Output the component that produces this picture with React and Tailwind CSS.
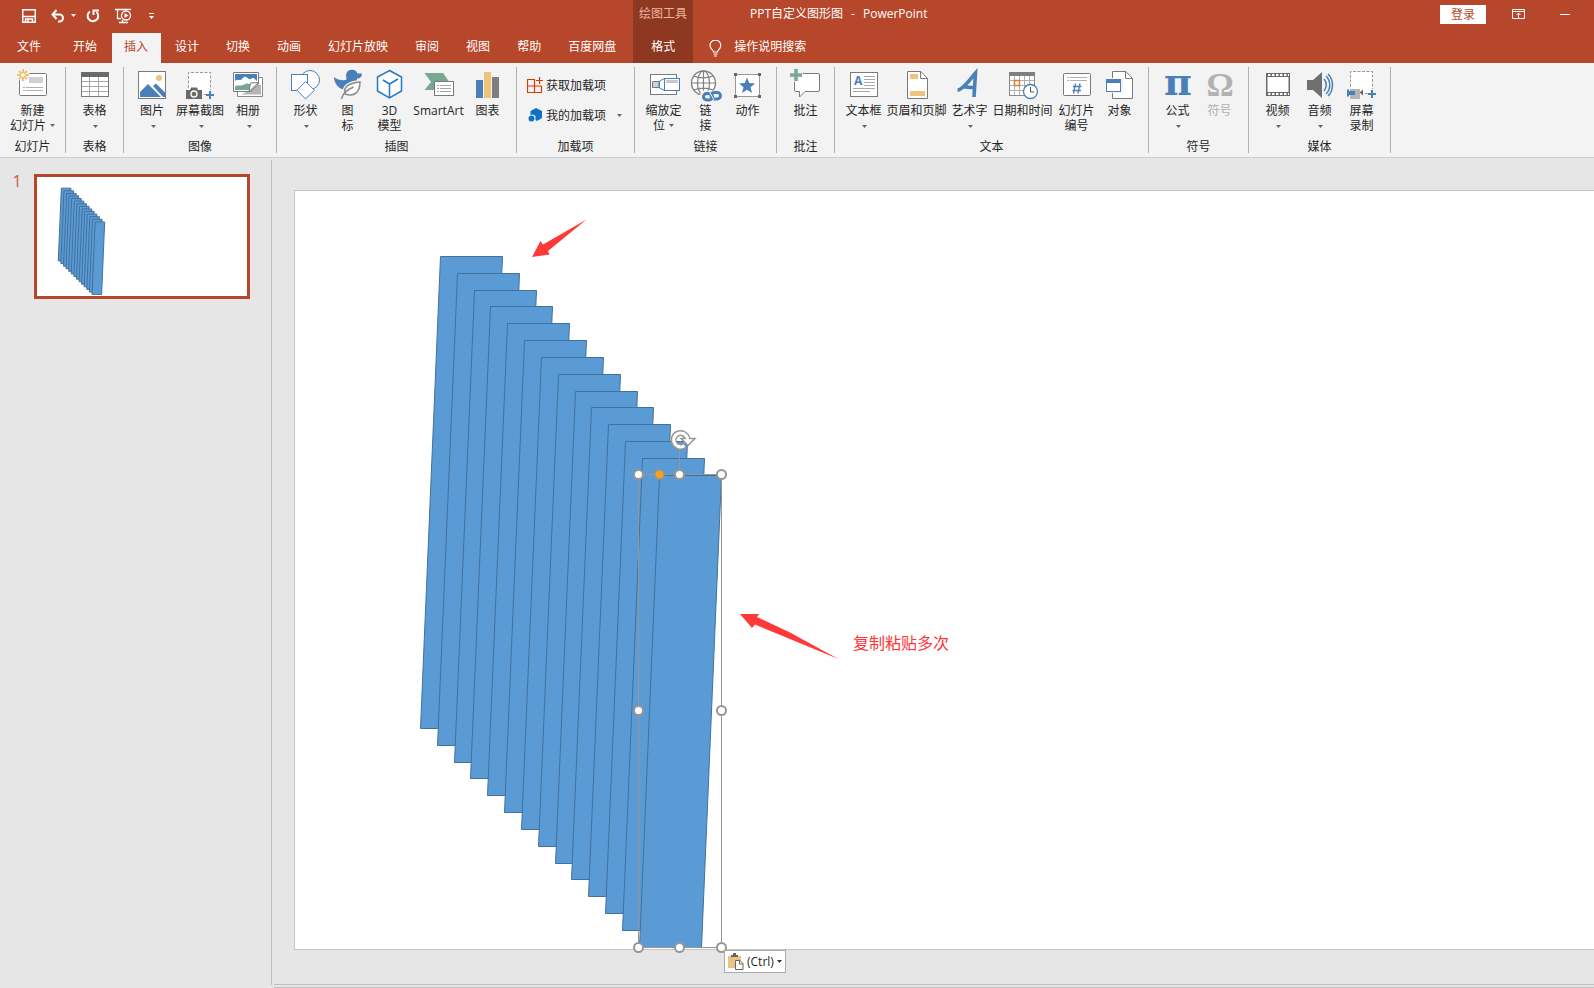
import React from 'react';

const BLUE = '#4a80b8';
const GREY = '#7a7a7a';
const GOLD = '#eec37a';
const GREEN = '#78a892';

function Icon({ children }) {
  return (
    <svg width="32" height="32" viewBox="0 0 32 32" fill="none" className="shrink-0 overflow-visible" aria-hidden="true">
      {children}
    </svg>
  );
}

function Caret({ color = '#666' }) {
  return (
    <svg width="5" height="3" viewBox="0 0 5 3" className="shrink-0" aria-hidden="true">
      <path d="M0 0h5L2.5 3z" fill={color} />
    </svg>
  );
}

const icons = {
  newSlide: (
    <Icon>
      <rect x="2.5" y="5.5" width="27" height="22" rx="1" fill="#fff" stroke={GREY} />
      <path d="M12 9h14v6H12z" fill="#d0d0d0" />
      <path d="M6 19.5h2m1 0h17M6 22.5h2m1 0h17" stroke="#b0b0b0" />
      <circle cx="6" cy="7" r="6.5" fill="#f3f3f3" />
      <path d="M6 1v3M6 10v3M0 7h3M9 7h3M2 3l2 2M8 9l2 2M10 3L8 5M4 9l-2 2" stroke={GOLD} strokeWidth="2" />
      <circle cx="6" cy="7" r="2.5" fill="#fff" stroke={GOLD} strokeWidth="1.3" />
    </Icon>
  ),
  table: (
    <Icon>
      <rect x="2.5" y="4.5" width="27" height="24" fill="#fff" stroke={GREY} />
      <path d="M2 4h28v5H2z" fill="#6a6a6a" />
      <path d="M3 13.5h26M3 18.5h26M3 23.5h26M10.5 9v19M19.5 9v19" stroke="#a8a8a8" />
    </Icon>
  ),
  picture: (
    <Icon>
      <rect x="2.5" y="3.5" width="27" height="27" fill="#fff" stroke={GREY} />
      <circle cx="23" cy="10" r="3" fill={GOLD} />
      <path d="M4 29v-5l8-8 13 13zM17 18l3-2.5 9 9V29h-2z" fill={BLUE} />
    </Icon>
  ),
  screenshot: (
    <Icon>
      <rect x="5" y="4" width="22" height="22" fill="#fff" />
      <path d="M4.5 20V4.5h22V22" stroke="#9a9a9a" strokeDasharray="3 1.5" />
      <path d="M2 22h4l1-2.5h6l1 2.5h4v9H2z" fill="#6a6a6a" />
      <circle cx="10" cy="26" r="3" stroke="#fff" strokeWidth="1.3" />
      <path d="M20 26.5h2" stroke="#9a9a9a" />
      <path d="M22 27h8M26 23v8" stroke={BLUE} strokeWidth="2" />
    </Icon>
  ),
  album: (
    <Icon>
      <path d="M5.5 27V9.5h25v19h-25z" fill="#fff" stroke="#8a8a8a" />
      <path d="M9 26.5h20V17l-4-1-6 6z" fill="#b5b5b5" />
      <path d="M1.5 4.5h25V16l-8 7.5h-17z" fill="#fff" stroke={GREY} />
      <path d="M3 6h22v7c-2-1-2-3-4-3s-2 2-4 1-3-3-5-2-2 3-4 3-3-1-5 1z" fill={BLUE} />
      <path d="M3 22v-4c4-1 6 0 8-1s4-2 6-1 3 1 4 2l-4 4z" fill={GREEN} />
      <path d="M26.5 14.5l-8 .5-1.5 8.5z" fill="#fff" stroke={GREY} />
    </Icon>
  ),
  shapes: (
    <Icon>
      <circle cx="20" cy="12" r="9.5" fill="#fff" stroke={BLUE} />
      <rect x="1.5" y="6.5" width="16" height="16" fill="#fff" stroke={BLUE} />
      <path d="M15.5 13.5l9 8.75-9 8.75L7 22.25z" fill="#fff" stroke={BLUE} />
    </Icon>
  ),
  duck: (
    <Icon>
      <path d="M14 7a6 6 0 0 1 11.5-1.5H30c0 3-2 5-5 5 0 3-1 4-3 5-5 2-8 4-8 6C8 22.5 2 16 2 9c3 3 8 3.5 12 3 1-1.500 0-3 0-5z" fill={BLUE} />
      <path d="M13 26c-2-8 5-11 15-12 0 10-5 15-15 12z" fill="#f3f3f3" stroke="#f3f3f3" strokeWidth="4" />
      <path d="M13 26c-2-8 5-11 15-12 0 10-5 15-15 12z" fill="#fff" stroke="#8a8a8a" strokeWidth="1.5" />
      <path d="M9.5 31c1-5 5-9 12-12" stroke="#8a8a8a" strokeWidth="1.5" />
    </Icon>
  ),
  cube: (
    <Icon>
      <path d="M15.5 2.5l12 6.500v14l-12 7-12-7V9z" fill="#fff" stroke="#1e7ac9" strokeWidth="1.5" />
      <path d="M9 12l6.500 4L24 11M15.500 16v14" stroke="#1e7ac9" strokeWidth="1.5" />
    </Icon>
  ),
  smartArt: (
    <Icon>
      <path d="M1.5 5H20l6 8.5H11.5V22h-10L8 14z" fill={GREEN} />
      <rect x="11.5" y="13.5" width="19" height="14" fill="#fff" stroke={GREY} />
      <path d="M14 17.5h2m1 0h11M14 20.5h2m1 0h11M14 23.5h2m1 0h11" stroke="#a8a8a8" />
    </Icon>
  ),
  chart: (
    <Icon>
      <path d="M4 12h7v18H4z" fill={BLUE} />
      <path d="M12 4h7v26h-7z" fill={GOLD} />
      <path d="M20 9h7v21h-7z" fill="#7f7f7f" />
    </Icon>
  ),
  zoom: (
    <Icon>
      <rect x="2.5" y="6.5" width="26" height="20" fill="#fff" stroke={GREY} />
      <path d="M4.5 13.5H11v6H4.5z" fill="#c3d3e6" stroke={GREY} />
      <path d="M11.5 13l5-2.5v12l-5-2.5z" fill="#fff" stroke={BLUE} />
      <rect x="16.5" y="10.5" width="15" height="12" fill="#fff" stroke={BLUE} />
      <path d="M18 12h12v3H18z" fill="#c8c8c8" />
    </Icon>
  ),
  link: (
    <Icon>
      <circle cx="13.5" cy="15" r="12" fill="#fff" stroke="#808080" strokeWidth="1.3" />
      <ellipse cx="13.5" cy="15" rx="6" ry="12" stroke="#808080" strokeWidth="1.2" />
      <path d="M1.5 15h24M13.5 3v24M4 8c5 2.5 14 2.5 19 0M4 22c5-2.5 14-2.500 19 0" stroke="#808080" strokeWidth="1.2" />
      <rect x="10" y="22.5" width="23" height="12" rx="5" fill="#f3f3f3" />
      <rect x="13.5" y="25.5" width="9" height="6.5" rx="3.25" stroke={BLUE} strokeWidth="3" />
      <rect x="21" y="24.500" width="9.500" height="6.5" rx="3.25" stroke={BLUE} strokeWidth="3" />
      <path d="M19.500 24l4.500 8" stroke="#f3f3f3" />
    </Icon>
  ),
  action: (
    <Icon>
      <rect x="3.5" y="6.5" width="24" height="22" fill="#fff" stroke="#999" />
      <path d="M2 5h3v3H2zM26 5h3v3h-3zM2 27h3v3H2zM26 27h3v3h-3z" fill="#666" />
      <path d="M15 9.5l2.2 5.6 5.8.3-4.5 3.8 1.5 5.8-5-3.3-5 3.3 1.5-5.8L7 15.4l5.8-.3z" fill={BLUE} />
    </Icon>
  ),
  comment: (
    <Icon>
      <path d="M6.5 5.5H28A1.5 1.5 0 0 1 29.5 7v15a1.5 1.5 0 0 1-1.5 1.5H15L9.5 29v-5.5H6A1.5 1.5 0 0 1 4.5 22V7z" fill="#fff" stroke={GREY} />
      <path d="M6 0v14M-1 7h14" stroke="#f3f3f3" strokeWidth="6" />
      <path d="M6 1v12M0 7h12" stroke={GREEN} strokeWidth="3.5" />
    </Icon>
  ),
  textBox: (
    <Icon>
      <rect x="2.5" y="4.5" width="27" height="24" fill="#fff" stroke={GREY} />
      <text x="6" y="17" fontSize="12" fontWeight="700" fontFamily="Open Sans, sans-serif" fill={BLUE}>A</text>
      <path d="M16 8.5h11M16 11.5h11M16 14.5h11M16 17.5h11M5 20.5h22M5 23.5h17" stroke="#a8a8a8" />
    </Icon>
  ),
  headerFooter: (
    <Icon>
      <path d="M6.5 3.5H20l6.5 7v20h-20z" fill="#fff" stroke={GREY} />
      <path d="M19.5 3.5v7h7" stroke={GREY} />
      <path d="M9 6h8v5H9zM9 23h15v5H9z" fill={GOLD} />
    </Icon>
  ),
  wordArt: (
    <Icon>
      <path d="M3.5 22C9 22 17 10 21.5 5L20 29M9 18.5c5 1.5 9 1 12.5 1" stroke={BLUE} strokeWidth="3.6" />
    </Icon>
  ),
  date: (
    <Icon>
      <rect x="2.5" y="4.5" width="25" height="23" fill="#fff" stroke="#8a8a8a" />
      <path d="M2 4h26v4H2z" fill="#7f7f7f" />
      <path d="M3 12.5h24M3 17.5h24M3 22.5h24M7.5 8v19M12.5 8v19M17.5 8v19M22.5 8v19" stroke="#b0b0b0" />
      <rect x="7.5" y="12.5" width="5" height="5" fill="#fff" stroke="#e07b39" strokeWidth="1.5" />
      <circle cx="23.5" cy="23.5" r="7" fill="#fff" stroke={BLUE} strokeWidth="1.3" />
      <path d="M23.5 19v5H27" stroke="#555" />
    </Icon>
  ),
  slideNumber: (
    <Icon>
      <rect x="2.5" y="5.5" width="27" height="22" rx="1" fill="#fff" stroke={GREY} />
      <path d="M6 9.5h2m1 0h17M6 12.5h2m1 0h17" stroke="#b0b0b0" />
      <path d="M14.5 15.5l-2 10M19 15.5l-2 10M12 18.5h8.5M11.5 22.5H20" stroke={BLUE} strokeWidth="1.3" />
    </Icon>
  ),
  object: (
    <Icon>
      <path d="M8.5 3.5H22l6.5 7v20h-20z" fill="#fff" stroke={GREY} />
      <path d="M21.5 3.5v7h7" stroke={GREY} />
      <rect x="1" y="10" width="18" height="15" fill="#f3f3f3" />
      <rect x="2.5" y="11.5" width="14" height="12" fill="#fff" stroke={BLUE} />
      <path d="M2 11h15v4H2z" fill={BLUE} />
    </Icon>
  ),
  equation: (
    <Icon>
      <text x="16" y="27" textAnchor="middle" fontSize="38" fontWeight="700" fontFamily="DejaVu Serif, serif" fill={BLUE}>π</text>
    </Icon>
  ),
  symbol: (
    <Icon>
      <text x="16" y="28" textAnchor="middle" fontSize="34" fontWeight="700" fontFamily="Liberation Serif, serif" fill="#b2b2b2">Ω</text>
    </Icon>
  ),
  video: (
    <Icon>
      <path d="M4 5h24v23H4z" fill="#6a6a6a" />
      <path d="M5.5 9h21v15h-21z" fill="#fff" />
      <path d="M6 7h21M6 26h21" stroke="#fff" strokeWidth="2" strokeDasharray="2.5 1.5" />
    </Icon>
  ),
  audio: (
    <Icon>
      <path d="M3 12h6l9-8v26l-9-8H3z" fill="#6f6f6f" />
      <path d="M20 11c3 3.5 3 8.5 0 12M22 8c5 5 5 13 0 18M24 6c6 6 6 16 0 22" stroke={BLUE} strokeWidth="1.5" />
    </Icon>
  ),
  record: (
    <Icon>
      <rect x="5" y="4" width="22" height="22" fill="#fff" />
      <path d="M4.5 19V3.5h22V21" stroke="#9a9a9a" strokeDasharray="3 1.5" />
      <path d="M4 21h10v10H4z" fill="#b5b5b5" />
      <path d="M1 21.5h2V23h6v4H3v1.5H1z" fill={BLUE} />
      <path d="M14 24l3-2.5v6L14 25z" fill="#6a6a6a" />
      <path d="M18.5 25.5h3" stroke="#9a9a9a" />
      <path d="M22 26h8M26 22v8" stroke={BLUE} strokeWidth="2" />
    </Icon>
  ),
};

const groups = [
  { label: '幻灯片', width: 'w-[66px]', items: [{ icon: 'newSlide', lines: ['新建', '幻灯片'], caret: true, width: 'w-[50px]' }] },
  { label: '表格', width: 'w-[58px]', items: [{ icon: 'table', lines: ['表格'], caret: true }] },
  {
    label: '图像',
    width: 'w-[153px]',
    items: [
      { icon: 'picture', lines: ['图片'], caret: true },
      { icon: 'screenshot', lines: ['屏幕截图'], caret: true, width: 'w-[54px]' },
      { icon: 'album', lines: ['相册'], caret: true },
    ],
  },
  {
    label: '插图',
    width: 'w-[240px]',
    items: [
      { icon: 'shapes', lines: ['形状'], caret: true },
      { icon: 'duck', lines: ['图', '标'] },
      { icon: 'cube', lines: ['3D', '模型'] },
      { icon: 'smartArt', lines: ['SmartArt'], width: 'w-[56px]' },
      { icon: 'chart', lines: ['图表'] },
    ],
  },
  { label: '加载项', width: 'w-[118px]', addins: true },
  {
    label: '链接',
    width: 'w-[142px]',
    items: [
      { icon: 'zoom', lines: ['缩放定', '位'], caret: true },
      { icon: 'link', lines: ['链', '接'] },
      { icon: 'action', lines: ['动作'] },
    ],
  },
  { label: '批注', width: 'w-[58px]', items: [{ icon: 'comment', lines: ['批注'] }] },
  {
    label: '文本',
    width: 'w-[314px]',
    items: [
      { icon: 'textBox', lines: ['文本框'], caret: true },
      { icon: 'headerFooter', lines: ['页眉和页脚'], width: 'w-[64px]' },
      { icon: 'wordArt', lines: ['艺术字'], caret: true },
      { icon: 'date', lines: ['日期和时间'], width: 'w-[64px]' },
      { icon: 'slideNumber', lines: ['幻灯片', '编号'], width: 'w-[44px]' },
      { icon: 'object', lines: ['对象'] },
    ],
  },
  {
    label: '符号',
    width: 'w-[100px]',
    items: [
      { icon: 'equation', lines: ['公式'], caret: true },
      { icon: 'symbol', lines: ['符号'], disabled: true },
    ],
  },
  {
    label: '媒体',
    width: 'w-[142px]',
    items: [
      { icon: 'video', lines: ['视频'], caret: true },
      { icon: 'audio', lines: ['音频'], caret: true },
      { icon: 'record', lines: ['屏幕', '录制'] },
    ],
  },
];

const tabs = ['开始', '插入', '设计', '切换', '动画', '幻灯片放映', '审阅', '视图', '帮助', '百度网盘'];

function RibbonButton({ item }) {
  const [first, second] = item.lines;
  return (
    <button
      type="button"
      disabled={item.disabled}
      className={`flex flex-col items-center shrink-0 whitespace-nowrap ${item.width || 'w-[42px]'} ${item.disabled ? 'text-[#b0b0b0]' : ''}`}
    >
      {icons[item.icon]}
      <span className="mt-[3px]">{first}</span>
      <span className={`flex h-[15px] items-center gap-1 ${second ? '' : 'pt-px pl-[2px]'}`}>
        {second}
        {item.caret && <Caret />}
      </span>
    </button>
  );
}

function Addins() {
  return (
    <div className="flex w-full flex-col gap-2 pt-[6px] pl-[10px]">
      <button type="button" className="flex h-[22px] items-center gap-[3px]">
        <svg width="16" height="18" viewBox="0 0 16 18" fill="none" stroke="#d83b01" aria-hidden="true">
          <path d="M8 3.5H.5v13h14V10M.5 10h14M7.500 3.500v13M12.500 1v7M9 4.500h7" strokeWidth="1.2" />
        </svg>
        获取加载项
      </button>
      <button type="button" className="flex h-[22px] items-center gap-[3px]">
        <svg width="16" height="16" viewBox="0 0 16 16" aria-hidden="true">
          <path d="M9 1l6 3v7l-5 3-1.5-1V9L6 7.500 3.500 8V4z" fill="#0f72c6" />
          <circle cx="4.500" cy="11.500" r="3" fill="#0f72c6" />
        </svg>
        我的加载项
        <span className="ml-2"><Caret /></span>
      </button>
    </div>
  );
}

function QuickAccess() {
  return (
    <div className="flex flex-1 items-center pb-[2px] pl-[22px]">
      <button type="button" aria-label="保存" className="mr-[15px]">
        <svg width="14" height="14" viewBox="0 0 14 14" fill="none" stroke="#fff" strokeWidth="1.5">
          <path d="M.75.75h12.5v12.5H.75zM1 7.5h12M3.5 13v-3h7v3M6 10v3" />
        </svg>
      </button>
      <button type="button" aria-label="撤消" className="mr-[6px]">
        <svg width="14" height="14" viewBox="0 0 14 14" fill="none" stroke="#fff" strokeWidth="2">
          <path d="M1 5.500h7.500a3.500 3.500 0 0 1 0 7H7M5.500 1l-4 4.500 4 4.500" />
        </svg>
      </button>
      <button type="button" aria-label="撤消选项" className="mr-[10px]"><Caret color="#fff" /></button>
      <button type="button" aria-label="重复" className="mr-[15px]">
        <svg width="14" height="14" viewBox="0 0 14 14" fill="none" stroke="#fff" strokeWidth="2">
          <path d="M4 2.500A5.300 5.300 0 1 0 10.500 3M7.500 6V1.500H13" />
        </svg>
      </button>
      <button type="button" aria-label="从头开始" className="mr-[17px]">
        <svg width="17" height="16" viewBox="0 0 17 16" fill="none" stroke="#fff" strokeWidth="1.3">
          <path d="M0 1.500h16M2.500 2v8.500H6M4 14.500h9M7.500 14.500V12" />
          <circle cx="11" cy="7.500" r="4.500" />
          <path d="M9.500 5l4 2.500-4 2.500z" fill="#fff" stroke="none" />
        </svg>
      </button>
      <button type="button" aria-label="自定义快速访问工具栏" className="flex flex-col items-center gap-[2px]">
        <span className="h-px w-[5px] bg-white" />
        <Caret color="#fff" />
      </button>
    </div>
  );
}

// Fourteen copies of one parallelogram, each pasted a step further down and right.
const copies = Array.from({ length: 14 }, (_, i) => Math.round(i * 16.83));

function Parallelograms() {
  return copies.map((d) => (
    <path
      key={d}
      d={`M${145.5 + d} ${65.5 + d}h62l-20 472h-62z`}
      fill="#5b9bd5"
      stroke="#41719c"
      vectorEffect="non-scaling-stroke"
    />
  ));
}

const handles = [
  [343.5, 283.5], [384.5, 283.5], [426.5, 283.5],
  [343.5, 519.5], [426.5, 519.5],
  [343.5, 756.5], [384.5, 756.5], [426.5, 756.5],
];

function SlideDrawing() {
  return (
    <svg width="1299" height="758" viewBox="0 0 1299 758" fill="none" className="absolute top-0 left-0 overflow-visible" aria-hidden="true">
      <Parallelograms />
      <rect x="343.5" y="283.5" width="83" height="473" stroke="#969696" />
      <path d="M384.5 258v22" stroke="#969696" />
      <path d="M392.5 249A7 7 0 1 0 390 254.400" stroke="#969696" strokeWidth="6" />
      <path d="M386 247.500h14l-7 7z" fill="#fff" stroke="#969696" strokeWidth="1.5" />
      <path d="M392.5 250.500A7 7 0 1 0 389.500 254.800" stroke="#fff" strokeWidth="3" />
      {handles.map(([x, y]) => (
        <circle key={`${x}-${y}`} cx={x} cy={y} r="4.5" fill="#fff" stroke="#969696" strokeWidth="2" />
      ))}
      <circle cx="364.5" cy="283.5" r="4.5" fill="#f5a11c" stroke="#a39484" strokeWidth="1.5" />
      <path d="M237 66l8.500-16 2.500 3.500 43.500-25L253 60l1.500 3.500z" fill="#ff3838" />
      <path d="M445 423h19l-2 3 33 15.500 48.500 26.500L460 433.500l-3 3.500z" fill="#ff3838" />
    </svg>
  );
}

function App() {
  return (
    <div className="flex min-h-screen flex-col overflow-hidden bg-[#e6e6e6] font-['Open_Sans','Noto_Sans_CJK_SC',sans-serif] text-[12px] leading-[15px] text-[#262626]">
      <header className="bg-[#b7472a] text-white">
        <div className="flex h-[33px]">
          <div className="flex w-[633px] shrink-0">
            <QuickAccess />
          </div>
          <div className="flex w-[60px] shrink-0 items-center justify-center bg-[#8e3721] pb-[6px] text-[#f0b39f]">绘图工具</div>
          <h1 className="flex flex-1 items-center gap-2 pb-[6px] pl-[57px] whitespace-nowrap">
            <span>PPT自定义图形图</span>
            <span>-</span>
            <span>PowerPoint</span>
          </h1>
          <div className="flex items-start">
            <button type="button" className="mt-[5px] h-[19px] w-[46px] bg-white text-[#b7472a]">登录</button>
            <button type="button" aria-label="功能区显示选项" className="mt-[9px] ml-[26px]">
              <svg width="13" height="10" viewBox="0 0 13 10" fill="none" stroke="#fff">
                <path d="M.5.5h12v9H.5zM.5 2.5h12M6.5 9V4.5M4.5 6l2-2 2 2" />
              </svg>
            </button>
            <button type="button" aria-label="最小化" className="mt-[14px] mr-6 ml-[35px] h-px w-[10px] bg-white" />
          </div>
        </div>
        <nav className="flex h-[30px] whitespace-nowrap">
          <button type="button" className="mr-[3px] w-[58px] pb-1">文件</button>
          {tabs.map((tab) => (
            <button
              key={tab}
              type="button"
              className={`mr-[2px] pr-[13px] pb-1 pl-3 ${tab === '插入' ? 'bg-[#f3f3f3] text-[#b7472a]' : ''}`}
            >
              {tab}
            </button>
          ))}
          <button type="button" className="ml-[2px] w-[60px] bg-[#8e3721] pb-1">格式</button>
          <button type="button" className="ml-4 flex items-center gap-3 pb-1">
            <svg width="13" height="17" viewBox="0 0 13 17" fill="none" stroke="#fff" strokeWidth="1.2" className="mt-1">
              <path d="M4.500 12c0-2-3.500-3-3.500-6.500a5.300 5.300 0 0 1 10.800 0C11.800 9 8.500 10 8.500 12zM4.500 14h4M5 16h3" />
            </svg>
            操作说明搜索
          </button>
        </nav>
      </header>

      <div className="flex h-[95px] border-b border-[#cccccc] bg-[#f3f3f3] pt-1 pb-1">
        {groups.map((group) => (
          <section key={group.label} className={`flex shrink-0 flex-col justify-between border-r border-[#b1b1b1] ${group.width}`}>
            <div className="flex justify-center pt-px">
              {group.addins ? <Addins /> : group.items.map((item) => <RibbonButton key={item.icon} item={item} />)}
            </div>
            <h2 className="-mb-px text-center">{group.label}</h2>
          </section>
        ))}
      </div>

      <div className="flex flex-1">
        <aside className="mt-[2px] mb-[3px] flex w-[272px] shrink-0 items-start border-r border-[#bfbfbf] pt-[14px]">
          <span className="w-[34px] text-center text-[16px] leading-[14px] text-[#d0583c]">1</span>
          <button type="button" aria-label="幻灯片 1" className="w-[216px] border-3 border-[#b7472a] bg-white p-px">
            <svg viewBox="-6 0 1349 758" className="block h-[117px] w-full">
              <Parallelograms />
            </svg>
          </button>
        </aside>
        <main className="flex min-w-0 flex-1 flex-col">
          <div className="flex flex-1 pt-8 pl-[22px]">
            <div className="relative min-h-[760px] flex-1 border-y border-l border-[#c6c6c6] bg-white">
              <SlideDrawing />
              <p className="absolute top-[440px] left-[558px] text-[16px] leading-[24px] text-[#ff3333]">复制粘贴多次</p>
              <button
                type="button"
                className="absolute top-[759px] left-[429px] flex h-[23px] w-[62px] items-center border border-[#ababab] bg-white pl-[3px]"
              >
                <svg width="16" height="17" viewBox="0 0 16 17" fill="none">
                  <path d="M0 3h13v5H7v7H0z" fill="#eac282" />
                  <path d="M3 4V2h2V0h3v2h2v2z" fill="#666" />
                  <path d="M7.5 7.5H12l3 3v6H7.500z" fill="#fff" stroke="#666" />
                  <path d="M11.5 7.5V11H15" stroke="#666" />
                </svg>
                <span className="mx-[3px]">(Ctrl)</span>
                <Caret color="#333" />
              </button>
            </div>
          </div>
          <div className="ml-[2px] h-[38px] pt-[34px]">
            <div className="h-1 border-y border-[#bfbfbf]" />
          </div>
        </main>
      </div>
    </div>
  );
}

export default App;
